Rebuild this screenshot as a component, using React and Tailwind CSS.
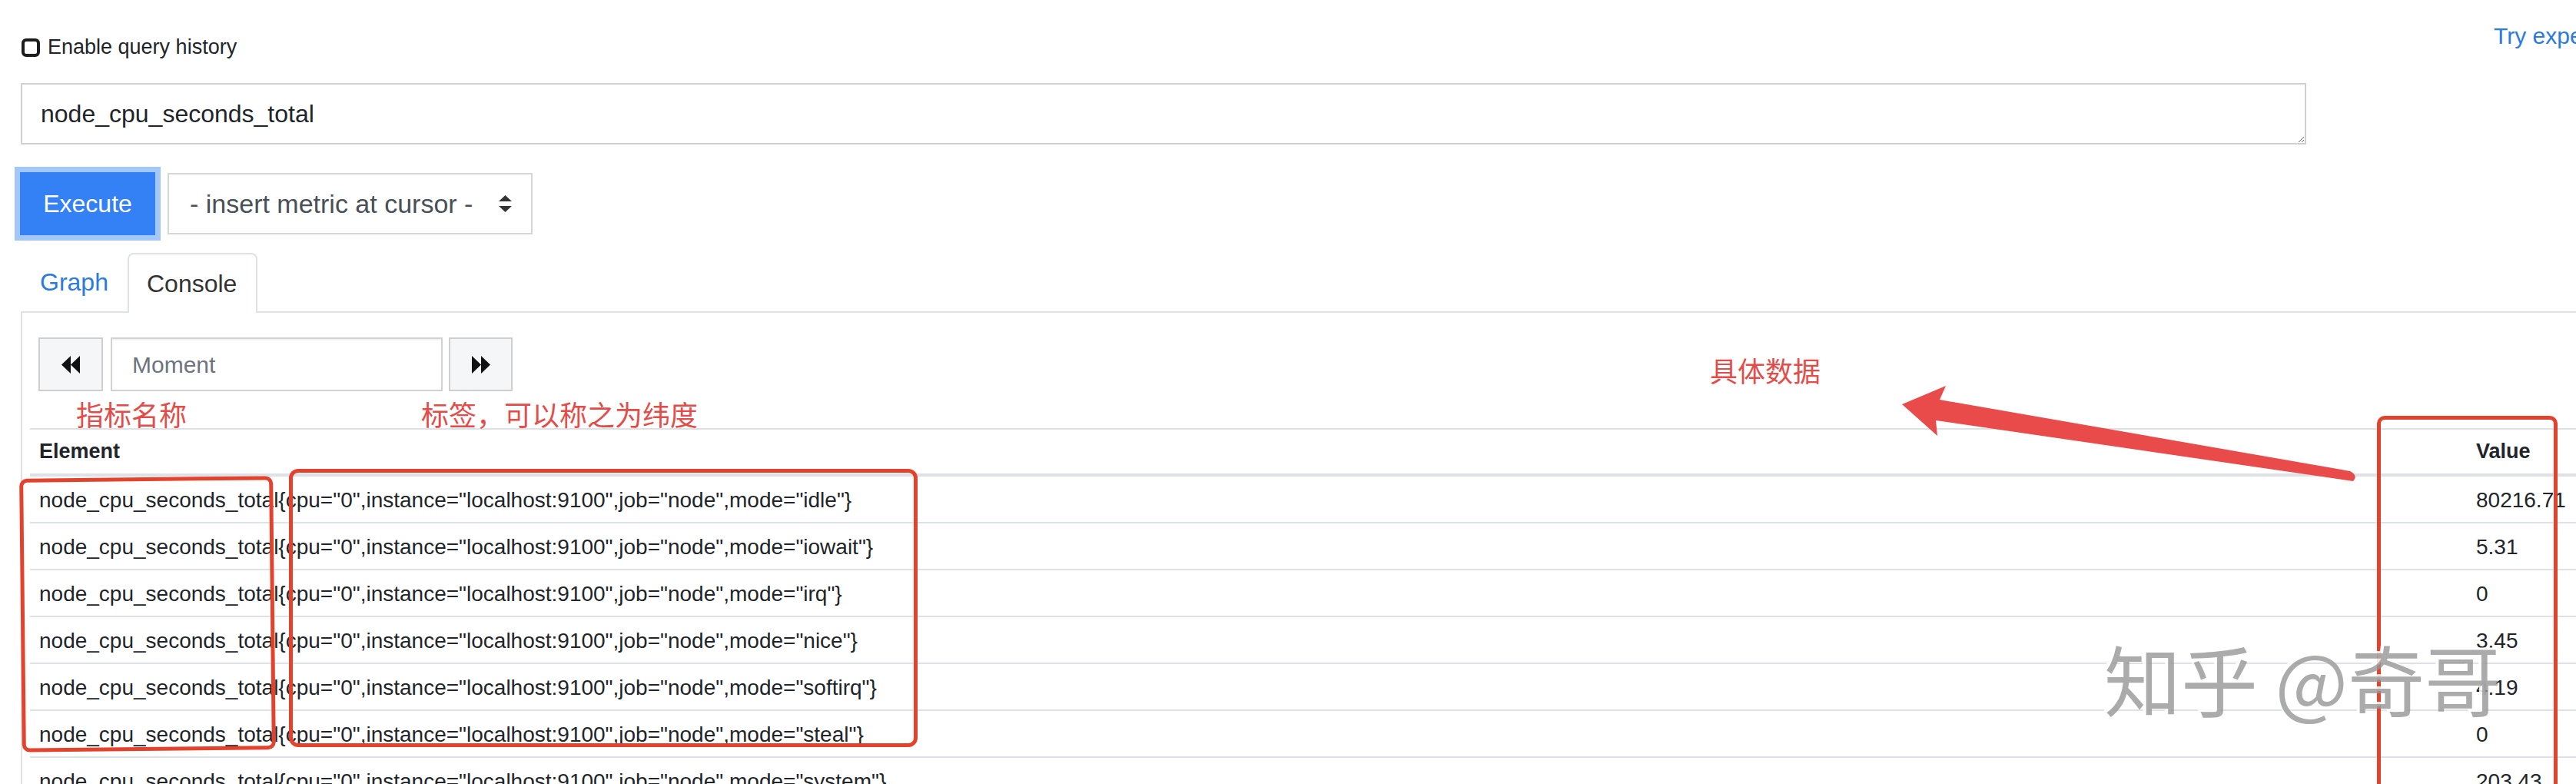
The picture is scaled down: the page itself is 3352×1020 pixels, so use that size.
import React from "react";

const rows = [
  ["idle", "80216.71"],
  ["iowait", "5.31"],
  ["irq", "0"],
  ["nice", "3.45"],
  ["softirq", "4.19"],
  ["steal", "0"],
  ["system", "203.43"],
];

const BackIcon = () => (
  <svg width="24" height="23" viewBox="0 0 24 23">
    <polygon points="12,0 12,23 0,11.5" fill="#111" />
    <polygon points="24,0 24,23 12,11.5" fill="#111" />
  </svg>
);

const FwdIcon = () => (
  <svg width="24" height="23" viewBox="0 0 24 23">
    <polygon points="0,0 0,23 12,11.5" fill="#111" />
    <polygon points="12,0 12,23 24,11.5" fill="#111" />
  </svg>
);

export default function App() {
  return (
    <div className="relative h-[1020px] w-[3352px] overflow-hidden bg-white font-['Liberation_Sans',Arial,sans-serif] text-[#212529]">
      <div className="w-[3600px] pl-[26px]">
        {/* Query history + link */}
        <div className="flex h-[108px] items-start">
          <div className="flex w-[3219px] items-center gap-[10px] pl-[2px] pt-[48px]">
            <span className="block h-[24px] w-[24px] rounded-[6px] border-[4px] border-[#1c1c1c]" />
            <span className="text-[27px] leading-[27px]">Enable query history</span>
          </div>
          <a className="mt-[32px] whitespace-nowrap text-[30px] leading-[30px] text-[#2a7ae2]">
            Try experimental React UI
          </a>
        </div>

        {/* Expression input */}
        <textarea
          className="ml-[1px] block h-[80px] w-[2974px] border-2 border-[#d0d0d0] px-[24px] pt-[18px] text-[32px] leading-[40px] text-[#212529] outline-none"
          defaultValue="node_cpu_seconds_total"
        />

        {/* Execute + metric select */}
        <div className="mt-[36px] flex items-center gap-[16px]">
          <button className="h-[82px] w-[176px] bg-[#3480f5] text-[32px] text-white shadow-[0_0_0_7px_#a3c6fb]">
            Execute
          </button>
          <div className="flex h-[80px] w-[475px] items-center justify-between border-2 border-[#d6d6d6] pl-[27px] pr-[25px]">
            <span className="text-[34px] leading-none text-[#495057]">- insert metric at cursor -</span>
            <svg width="17" height="22" viewBox="0 0 17 22">
              <polygon points="8.5,0 17,8 0,8" fill="#333" />
              <polygon points="0,14 17,14 8.5,22" fill="#333" />
            </svg>
          </div>
        </div>

        {/* Tabs */}
        <div className="ml-[1px] mt-[23px] flex h-[76px] items-start">
          <div className="flex h-[76px] w-[139px] items-center pl-[25px] text-[32px] text-[#2a7ae2]">Graph</div>
          <div className="relative z-10 flex h-[78px] w-[169px] items-center rounded-t-[8px] border-2 border-b-0 border-[#dee2e6] bg-white pl-[23px] text-[32px] text-[#333]">
            Console
          </div>
        </div>

        {/* Console panel */}
        <div className="ml-[1px] border-l-2 border-t-2 border-[#dee2e6] pl-[10px] pt-[32px]">
          <div className="ml-[11px] flex h-[70px] items-stretch">
            <div className="flex w-[84px] items-center justify-center border-2 border-[#cfcfcf] bg-[#f5f6f7]">
              <BackIcon />
            </div>
            <input
              className="ml-[10px] w-[432px] border-2 border-[#d2d2d2] pl-[26px] text-[30px] shadow-[inset_0_2px_2px_rgba(0,0,0,0.06)] outline-none placeholder:text-[#6c757d]"
              placeholder="Moment"
            />
            <div className="ml-[8px] flex w-[83px] items-center justify-center border-2 border-[#cfcfcf] bg-[#f5f6f7]">
              <FwdIcon />
            </div>
          </div>

          {/* Result table */}
          <div className="mt-[48px]">
            <div className="flex h-[63px] items-center border-b-4 border-t-2 border-[#dee2e6] text-[27px] font-bold">
              <div className="w-[3171px] px-[12px]">Element</div>
              <div className="w-[300px] px-[12px]">Value</div>
            </div>
            {rows.map(([mode, value]) => (
              <div key={mode} className="flex h-[61px] items-center border-b-2 border-[#dee2e6] pt-[2px] text-[28px]">
                <div className="w-[3171px] whitespace-nowrap px-[12px]">
                  {`node_cpu_seconds_total{cpu="0",instance="localhost:9100",job="node",mode="${mode}"}`}
                </div>
                <div className="w-[300px] px-[12px]">{value}</div>
              </div>
            ))}
          </div>
        </div>
      </div>

      {/* Annotation overlay */}
      <div className="pointer-events-none absolute left-[27px] top-[621px] h-[356px] w-[330px] -rotate-[0.6deg] rounded-[10px] border-[5px] border-[#e3432d]" />
      <div className="pointer-events-none absolute left-[376px] top-[610px] h-[362px] w-[818px] rounded-[12px] border-[5px] border-[#e3432d]" />
      <div className="pointer-events-none absolute left-[3093px] top-[541px] h-[520px] w-[235px] rounded-[10px] border-[5px] border-[#e3432d]" />

      <div className="pointer-events-none absolute left-[99px] top-[520px] font-['Noto_Sans_CJK_SC',sans-serif] text-[36px] leading-[36px] text-[#e24d4a]">
        指标名称
      </div>
      <div className="pointer-events-none absolute left-[548px] top-[520px] font-['Noto_Sans_CJK_SC',sans-serif] text-[36px] leading-[36px] text-[#e24d4a]">
        标签，可以称之为纬度
      </div>
      <div className="pointer-events-none absolute left-[2225px] top-[463px] font-['Noto_Sans_CJK_SC',sans-serif] text-[36px] leading-[36px] text-[#e24d4a]">
        具体数据
      </div>

      <svg className="pointer-events-none absolute left-0 top-0" width="3352" height="1020">
        <path
          d="M2475 526 L2532 502 L2524 520 L3058 613 Q3069 619 3062 626 L2519 547 L2521 567 Z"
          fill="#e94b4b"
        />
      </svg>

      <div className="pointer-events-none absolute left-[2738px] top-[832px] whitespace-nowrap font-['Noto_Sans_CJK_SC',sans-serif] text-[100px] leading-none text-[rgba(150,150,150,0.8)] [text-shadow:-4px_-3px_0_rgba(255,255,255,0.85)]">
        知乎 @奇哥
      </div>
    </div>
  );
}
